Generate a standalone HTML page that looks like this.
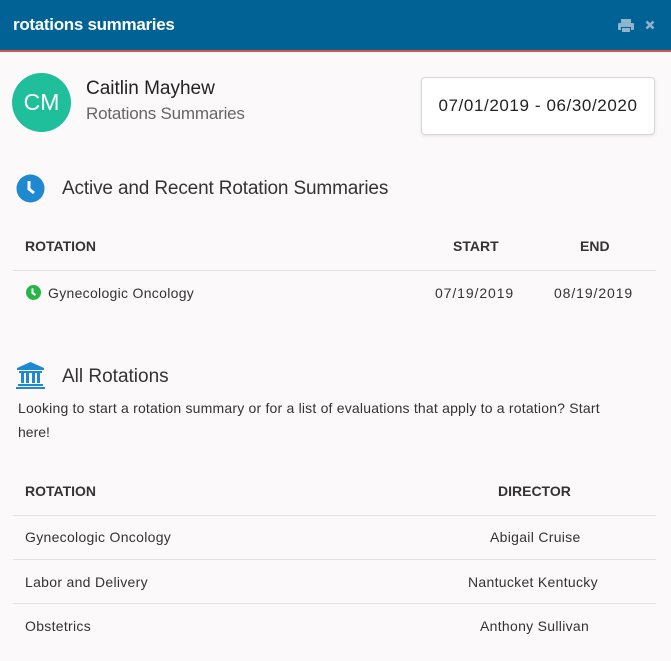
<!DOCTYPE html>
<html><head><style>
*{margin:0;padding:0;box-sizing:border-box}
body{width:671px;height:661px;background:#fbf9fa;font-family:"Liberation Sans",sans-serif;color:#333;position:relative;overflow:hidden}
.a{position:absolute;white-space:nowrap}
.hdr{position:absolute;left:0;top:0;width:671px;height:52px;background:#016295;border-bottom:2px solid #d9534f}
.line{position:absolute;left:13px;width:643px;height:1px;background:#e3e1e2}
.th{font-size:14px;font-weight:bold;color:#333}
.td{font-size:14px;color:#333;letter-spacing:0.3px}
.dt{letter-spacing:0.9px}
</style></head><body>
<div class="hdr"></div>
<div class="a" style="left:13px;top:15px;font-size:17px;font-weight:bold;color:#fff;letter-spacing:-0.3px">rotations summaries</div>
<svg class="a" style="left:618px;top:18px" width="16" height="15" viewBox="0 0 16 15"><rect x="3" y="1" width="10" height="4" fill="#8fb4cc"/><rect x="0" y="5" width="16" height="7" rx="1" fill="#8fb4cc"/><rect x="3" y="9" width="10" height="5" fill="#016295"/><rect x="4" y="10" width="8" height="4" fill="#8fb4cc"/></svg>
<svg class="a" style="left:645px;top:20px" width="10" height="10" viewBox="0 0 10 10"><path d="M1.5 1.5L8.5 8.5M8.5 1.5L1.5 8.5" stroke="#8fb4cc" stroke-width="2.6"/></svg>
<div class="a" style="left:12px;top:73px;width:59px;height:59px;border-radius:50%;background:#1fbf9c;color:#fff;font-size:23px;text-align:center;line-height:59px">CM</div>
<div class="a" style="left:86px;top:78px;font-size:19px;color:#222">Caitlin Mayhew</div>
<div class="a" style="left:86px;top:104px;font-size:17px;color:#666;letter-spacing:-0.2px">Rotations Summaries</div>
<div class="a" style="left:421px;top:77px;width:234px;height:58px;background:#fff;border:1px solid #d8d8d8;border-radius:4px;box-shadow:0 1px 3px rgba(0,0,0,.1);font-size:17px;text-align:center;line-height:56px;color:#222;letter-spacing:0.6px">07/01/2019 - 06/30/2020</div>
<svg class="a" style="left:16px;top:174px" width="29" height="29" viewBox="0 0 29 29"><circle cx="14.5" cy="14.5" r="14" fill="#1e88d0"/><path d="M13 7v8l5 4" stroke="#fff" stroke-width="3" fill="none"/></svg>
<div class="a" style="left:62px;top:178px;font-size:19px;color:#333;letter-spacing:-0.15px">Active and Recent Rotation Summaries</div>
<div class="a th" style="left:25px;top:238px">ROTATION</div>
<div class="a th" style="left:453px;top:238px">START</div>
<div class="a th" style="left:580px;top:238px">END</div>
<div class="line" style="top:270px"></div>
<svg class="a" style="left:26px;top:285px" width="15" height="15" viewBox="0 0 15 15"><circle cx="7.5" cy="7.5" r="7.5" fill="#27b54a"/><path d="M6.5 3.5v4.5l3 2" stroke="#fff" stroke-width="2" fill="none"/></svg>
<div class="a td" style="left:48px;top:285px">Gynecologic Oncology</div>
<div class="a td dt" style="left:435px;top:285px">07/19/2019</div>
<div class="a td dt" style="left:554px;top:285px">08/19/2019</div>
<svg class="a" style="left:16px;top:362px" width="29" height="27" viewBox="0 0 29 27"><path d="M14.5 0L1 6v2h27V6z" fill="#1e88d0"/><rect x="3" y="9" width="23" height="2" fill="#1e88d0"/><rect x="5" y="11" width="3" height="10" fill="#1e88d0"/><rect x="10" y="11" width="3" height="10" fill="#1e88d0"/><rect x="16" y="11" width="3" height="10" fill="#1e88d0"/><rect x="21" y="11" width="3" height="10" fill="#1e88d0"/><rect x="2" y="22" width="25" height="2" fill="#1e88d0"/><rect x="0" y="25" width="29" height="2" fill="#1e88d0"/></svg>
<div class="a" style="left:62px;top:366px;font-size:19px;color:#333">All Rotations</div>
<div class="a" style="left:18px;top:400px;font-size:14px;color:#333;letter-spacing:0.2px">Looking to start a rotation summary or for a list of evaluations that apply to a rotation? Start</div>
<div class="a" style="left:18px;top:424px;font-size:14px;color:#333">here!</div>
<div class="a th" style="left:25px;top:483px">ROTATION</div>
<div class="a th" style="left:498px;top:483px">DIRECTOR</div>
<div class="line" style="top:515px"></div>
<div class="a td" style="left:25px;top:529px">Gynecologic Oncology</div>
<div class="a td" style="left:490px;top:529px">Abigail Cruise</div>
<div class="line" style="top:559px"></div>
<div class="a td" style="left:25px;top:574px">Labor and Delivery</div>
<div class="a td" style="left:468px;top:574px">Nantucket Kentucky</div>
<div class="line" style="top:603px"></div>
<div class="a td" style="left:25px;top:618px">Obstetrics</div>
<div class="a td" style="left:480px;top:618px">Anthony Sullivan</div>
</body></html>
